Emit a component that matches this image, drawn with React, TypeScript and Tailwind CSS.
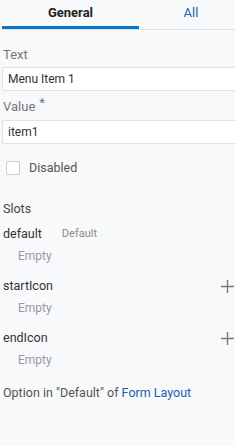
import React from "react";

const font = { fontFamily: 'Roboto, "Noto Sans", sans-serif' };

const Plus = () => (
  <svg width="13" height="13" viewBox="0 0 13 13" className="text-[#7a7a7a]">
    <path d="M6.5 0v13M0 6.5h13" stroke="currentColor" strokeWidth="1.4" />
  </svg>
);

const Slot = ({ name, extra, add }: { name: string; extra?: string; add?: boolean }) => (
  <div>
    <div className="flex h-[18px] items-center justify-between pr-[1px]">
      <div className="flex items-center">
        <span className="text-[12.5px] text-[#333]">{name}</span>
        {extra && <span className="ml-[20px] text-[11px] text-[#8a8a8a]">{extra}</span>}
      </div>
      {add && <Plus />}
    </div>
    <div className="mt-[5px] flex h-[16px] items-center pl-[15px] text-[12px] text-[#9a96a6]">Empty</div>
  </div>
);

export default function App() {
  return (
    <div className="h-[446px] w-[235px] overflow-hidden bg-[#f8f9fb]" style={font}>
      {/* tabs */}
      <div className="ml-[2px] flex h-[30px] border-b border-[#dde1e6]">
        <div className="flex w-[137px] shrink-0 flex-col">
          <div className="flex h-[26px] items-center justify-center text-[13px] font-bold text-[#222]">General</div>
          <div className="h-[3px] bg-[#0a76c9]" />
        </div>
        <div className="flex h-[26px] w-[104px] shrink-0 items-center justify-center text-[13px] text-[#1d5ea8]">All</div>
      </div>

      <div className="pl-[2px]">
        <div className="mt-[17px] flex h-[16px] items-center pl-[1px] text-[13px] text-[#777]">Text</div>
        <div className="mt-[4px] flex h-[24px] w-[240px] items-center rounded-[2px] border border-[#dfe1e5] bg-white pl-[5px] text-[12px] text-[#333]">
          Menu Item 1
        </div>

        <div className="mt-[8px] flex h-[16px] items-center pl-[1px] text-[13px] text-[#777]">
          Value
          <span className="ml-[4px] -mt-[8px] text-[13px] text-[#3b7fc4]">*</span>
        </div>
        <div className="mt-[5px] flex h-[24px] w-[240px] items-center rounded-[2px] border border-[#dfe1e5] bg-white pl-[5px] text-[12px] text-[#333]">
          item1
        </div>

        <label className="mt-[16px] flex h-[16px] items-center pl-[4px]">
          <span className="h-[14px] w-[14px] rounded-[2px] border border-[#c8cbd0] bg-white" />
          <span className="ml-[9px] text-[12.5px] text-[#555]">Disabled</span>
        </label>

        <div className="mt-[24px] flex h-[18px] items-center pl-[1px] text-[12.5px] text-[#444]">Slots</div>

        <div className="mt-[7px] pl-[1px]">
          <Slot name="default" extra="Default" />
        </div>
        <div className="mt-[13px] pl-[1px]">
          <Slot name="startIcon" add />
        </div>
        <div className="mt-[13px] pl-[1px]">
          <Slot name="endIcon" add />
        </div>

        <div className="mt-[16px] flex h-[18px] items-center pl-[1px] text-[12.5px] text-[#555]">
          Option in "Default" of&nbsp;<span className="text-[#1d5ea8]">Form Layout</span>
        </div>
      </div>
    </div>
  );
}
